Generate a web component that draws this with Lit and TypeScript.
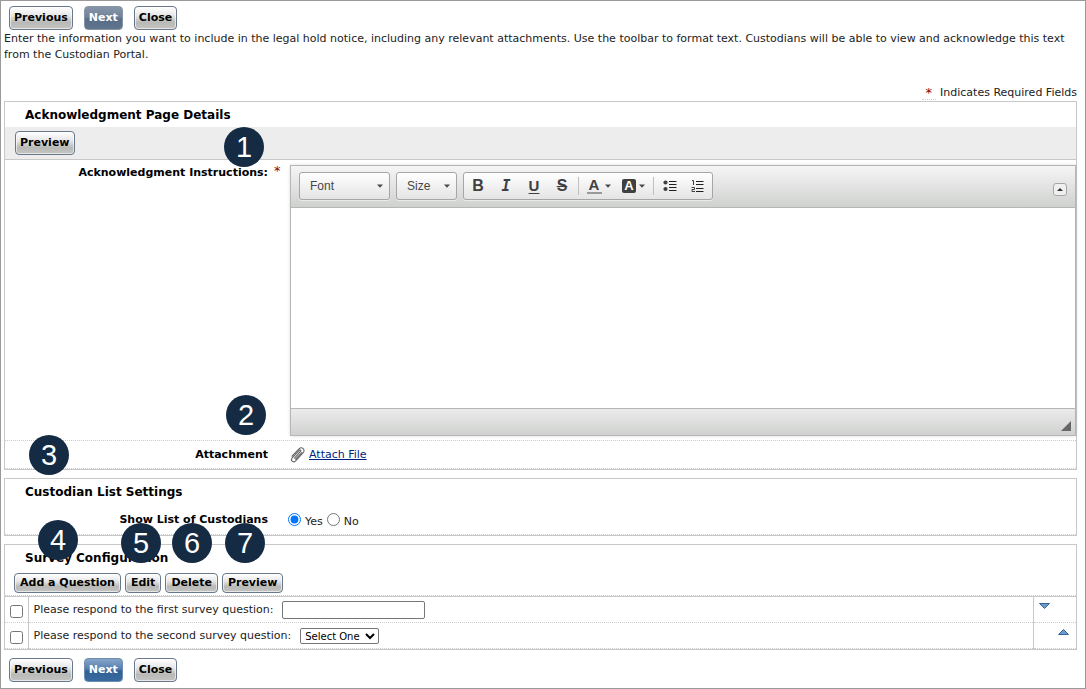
import { LitElement, html, css, svg } from "lit";
import { customElement, property } from "lit/decorators.js";

const caret = html`<svg class="caret" width="6" height="4" viewBox="0 0 6 4" aria-hidden="true"><path d="M0 0.5H6L3 3.8Z" fill="#484848" /></svg>`;

@customElement("rich-editor")
class RichEditor extends LitElement {
  static styles = css`
    :host { display: block; min-width: 0; }
    * { box-sizing: border-box; }
    .editor { border: 1px solid #b6b6b6; box-shadow: 0 0 3px rgba(0, 0, 0, 0.15); background: #fff; }
    .top {
      display: flex; align-items: center; gap: 6px; height: 42px; padding: 0 8px 2px;
      border-bottom: 1px solid #b6b6b6;
      background: linear-gradient(#f5f5f5, #cfd1cf);
    }
    .combo { display: inline-grid; align-items: center; }
    .combo > * { grid-area: 1 / 1; }
    .combo .caret { justify-self: end; margin-right: 7px; pointer-events: none; }
    select {
      appearance: none; height: 28px; margin: 0; padding: 0 18px 0 10px;
      border: 1px solid #a6a6a6; border-radius: 3px;
      background: linear-gradient(#fff, #e4e4e4);
      color: #474747; font: 12px/16px "Liberation Sans", Arial, sans-serif;
      box-shadow: 0 1px 0 rgba(255, 255, 255, 0.5);
    }
    .font { width: 91px; }
    .size { width: 61px; }
    .group {
      display: flex; align-items: center; height: 28px;
      border: 1px solid #a6a6a6; border-radius: 3px;
      background: linear-gradient(#fff, #e4e4e4);
      box-shadow: 0 1px 0 rgba(255, 255, 255, 0.5);
    }
    button {
      display: flex; align-items: center; justify-content: center; gap: 3px;
      width: 28px; height: 26px; margin: 0; padding: 0; border: 0; background: none;
      color: #404040; font: bold 16px/16px "Liberation Sans", Arial, sans-serif;
    }
    .wide { width: 35px; }
    .italic { font: italic bold 15px/16px "DejaVu Sans Mono", monospace; }
    .underline { font-size: 15px; text-decoration: underline; text-underline-offset: 2px; text-decoration-thickness: 1px; }
    .strike { text-decoration: line-through; text-decoration-thickness: 1px; }
    .ink { width: 15px; height: 16px; border-bottom: 2px solid #999; font-size: 15px; line-height: 14px; }
    .fill { width: 14px; height: 14px; border-radius: 2px; background: #404040; color: #fff; font-size: 13px; line-height: 14px; }
    .sep { width: 1px; height: 18px; margin: 0 2px; background: #c0c0c0; }
    .collapse {
      width: 14px; height: 13px; margin: 8px 0 0 auto;
      border: 1px solid #a6a6a6; border-radius: 3px; background: #efefef;
    }
    textarea {
      display: block; width: 100%; height: 200px; margin: 0; padding: 8px;
      border: 0; resize: none; outline: 0; background: #fff;
      font: 12px/16px "Liberation Sans", Arial, sans-serif;
    }
    .bottom {
      display: flex; align-items: flex-end; justify-content: flex-end;
      height: 27px; padding: 4px; border-top: 1px solid #b6b6b6;
      background: linear-gradient(#ebebeb, #cfd1cf);
    }
    svg { display: block; }
  `;

  render() {
    return html`
      <div class="editor">
        <div class="top">
          <span class="combo"><select class="font" aria-label="Font"><option>Font</option></select>${caret}</span>
          <span class="combo"><select class="size" aria-label="Size"><option>Size</option></select>${caret}</span>
          <div class="group">
            <button aria-label="Bold">B</button>
            <button class="italic" aria-label="Italic">I</button>
            <button class="underline" aria-label="Underline">U</button>
            <button class="strike" aria-label="Strikethrough">S</button>
            <span class="sep"></span>
            <button class="wide" aria-label="Text color"><span class="ink">A</span>${caret}</button>
            <button class="wide" aria-label="Background color"><span class="fill">A</span>${caret}</button>
            <span class="sep"></span>
            <button aria-label="Bulleted list">
              <svg width="14" height="12" viewBox="0 0 14 12">
                <g fill="#404040"><circle cx="2.5" cy="2.5" r="2.1" /><circle cx="2.5" cy="9" r="2.1" /></g>
                <path d="M6 1.5h7.5M6 4.5h7.5M6 7.5h7.5M6 10.5h7.5" stroke="#202020" />
              </svg>
            </button>
            <button aria-label="Numbered list">
              <svg width="14" height="12" viewBox="0 0 14 12">
                <path d="M1 0.5h1.5V5M0.5 7.5h3V9.5H1V11.5H4" fill="none" stroke="#404040" />
                <path d="M5 1.5h7.5M5 4.5h7.5M5 8.5h7.5M5 11.5h7.5" stroke="#202020" />
              </svg>
            </button>
          </div>
          <button class="collapse" aria-label="Collapse toolbar">
            <svg width="6" height="3" viewBox="0 0 6 3"><path d="M0 3H6L3 0Z" fill="#333" /></svg>
          </button>
        </div>
        <textarea aria-label="Acknowledgment Instructions"></textarea>
        <div class="bottom">
          <svg width="10" height="10" viewBox="0 0 10 10"><path d="M10 0V10H0Z" fill="#666" /></svg>
        </div>
      </div>
    `;
  }
}

@customElement("step-buttons")
class StepButtons extends LitElement {
  @property() tone = "muted";

  static styles = css`
    :host { display: flex; gap: 11px; }
    button {
      box-sizing: border-box; height: 24px; margin: 0; padding: 0 4px 1px;
      border: 1px solid #68788a; border-radius: 4px;
      background: linear-gradient(#fff, #e6e6e6 40%, #b9b9b7 70%, #c4c4c2);
      box-shadow: inset 0 0 0 1px rgba(255, 255, 255, 0.6);
      color: #000; font: bold 11px/16px "DejaVu Sans", Verdana, sans-serif;
    }
    .muted { border-color: #8794a5; background: linear-gradient(#8795a8, #71839a 45%, #576d88 55%, #60748d); color: #fff; box-shadow: none; }
    .active { border-color: #6e8db0; background: linear-gradient(#86a5c8, #5580b0 45%, #2f6096 55%, #386a9f); color: #fff; box-shadow: none; }
  `;

  render() {
    return html`<button>Previous</button><button class=${this.tone}>Next</button><button>Close</button>`;
  }
}

const callouts = [
  { n: 1, x: 223, y: 126 },
  { n: 2, x: 225, y: 394 },
  { n: 3, x: 28, y: 434 },
  { n: 4, x: 37, y: 519 },
  { n: 5, x: 120, y: 522 },
  { n: 6, x: 171, y: 522 },
  { n: 7, x: 224, y: 522 },
];

@customElement("app-root")
class AppRoot extends LitElement {
  static styles = css`
    :host {
      display: block; position: relative; box-sizing: border-box; min-height: 100vh;
      padding: 5px 8px 4px 3px; border: 1px solid #999; background: #fff;
      color: #222; font: 11px/16px "DejaVu Sans", Verdana, sans-serif;
    }
    * { box-sizing: border-box; }
    p { margin: 0; padding-top: 1px; }
    step-buttons { padding: 0 5px; }
    .required { display: flex; justify-content: flex-end; gap: 4px; margin-top: 22px; height: 16px; }
    .star { color: #8b0000; font-size: 13px; line-height: 16px; }
    .required .star { height: 15px; padding: 0 4px; border-bottom: 1px dotted #ccc; }
    .panel { margin-bottom: 8px; border: 1px solid #c8c8c8; }
    h2 { margin: 0; padding: 1px 20px 0; color: #000; font-size: 12px; line-height: 24px; }
    .bar { height: 33px; padding: 4px 10px; border-bottom: 1px solid #c8c8c8; background: #ededed; }
    .field { display: grid; grid-template-columns: 263px 1fr; column-gap: 22px; border-bottom: 1px dotted #ccc; }
    .name { color: #000; font-weight: bold; text-align: right; }
    .instructions { padding: 5px 0 4px; }
    .instructions .name { position: relative; }
    .name .star { position: absolute; left: 100%; bottom: 100%; margin: 0 0 -14px 6px; font-weight: normal; }
    .attach { padding: 6px 0 5px; }
    .file { display: flex; align-items: center; gap: 4px; }
    a { color: #001f7e; line-height: 14px; }
    .show { padding: 8px 0 5px; }
    .choices { display: flex; align-items: center; height: 17px; margin-left: -2px; }
    .choices input { width: 13px; height: 13px; margin: 0 4px 2px 0; }
    .choices label { padding-top: 2px; margin-right: 4px; }
    .small {
      display: block; height: 24px; padding: 0 4px 1px; border: 1px solid #68788a; border-radius: 4px;
      background: linear-gradient(#fff, #e6e6e6 40%, #b9b9b7 70%, #c4c4c2);
      box-shadow: inset 0 0 0 1px rgba(255, 255, 255, 0.6);
      color: #000; font: bold 11px/16px "DejaVu Sans", Verdana, sans-serif;
    }
    .actions { display: flex; gap: 4px; padding: 3px 9px 2px; border-bottom: 1px dotted #ccc; }
    .actions .small { height: 20px; padding: 0 5px; }
    table { width: 100%; border-collapse: collapse; border-top: 1px solid #c8c8c8; }
    td { height: 26px; padding: 1px 0 0; border-bottom: 1px dotted #ccc; vertical-align: middle; }
    .check { width: 23px; border-right: 1px solid #c8c8c8; }
    .check input { display: block; width: 13px; height: 13px; margin: 3px 0 0 5px; }
    .question { display: flex; align-items: center; gap: 9px; padding-left: 5px; }
    .text { width: 143px; height: 18px; margin: 0; border: 1px solid #767676; border-radius: 2px; background: #fff; }
    .pick { width: 79px; height: 16px; margin: 0; padding: 0; border: 1px solid #767676; border-radius: 2px; background: #fff; color: #000; font: 10px/14px "DejaVu Sans", Verdana, sans-serif; }
    .order { width: 43px; border-left: 1px solid #c8c8c8; }
    .move { display: block; margin: 0 0 8px 5px; padding: 0; border: 0; background: none; }
    .up { margin-left: 24px; }
    svg { display: block; }
    .callout {
      position: absolute; width: 40px; height: 40px; border-radius: 50%;
      background: #142b43; color: #fff; text-align: center;
      font: 29px/40px "Liberation Sans", Arial, sans-serif;
    }
  `;

  private row(n: number, label: string, control: unknown, down: boolean) {
    return html`
      <tr>
        <td class="check"><input type="checkbox" aria-label="Select question ${n}" /></td>
        <td><div class="question"><label for="q${n}">${label}</label>${control}</div></td>
        <td class="order">
          <button class="move ${down ? "" : "up"}" aria-label=${down ? "Move down" : "Move up"}>
            <svg width="11" height="6" viewBox="0 0 11 6">
              ${down
                ? svg`<path d="M0.5 0.5H10.5L5.5 5.5Z" fill="#6d9acb" stroke="#35649b" />`
                : svg`<path d="M0.5 5.5H10.5L5.5 0.5Z" fill="#6d9acb" stroke="#35649b" />`}
            </svg>
          </button>
        </td>
      </tr>
    `;
  }

  render() {
    return html`
      <step-buttons tone="muted"></step-buttons>
      <p>Enter the information you want to include in the legal hold notice, including any relevant attachments. Use the toolbar to format text. Custodians will be able to view and acknowledge this text from the Custodian Portal.</p>
      <div class="required"><span class="star">*</span><span>Indicates Required Fields</span></div>

      <section class="panel">
        <h2>Acknowledgment Page Details</h2>
        <div class="bar"><button class="small">Preview</button></div>
        <div class="field instructions">
          <div class="name">Acknowledgment Instructions:<span class="star">*</span></div>
          <rich-editor></rich-editor>
        </div>
        <div class="field attach">
          <div class="name">Attachment</div>
          <div class="file">
            <svg width="15" height="16" viewBox="0 0 15 16" fill="none" stroke="#666" stroke-width="1.1" stroke-linecap="round">
              <path d="M4.5 11.2L10.6 4.4C11.3 3.6 10.2 2.4 9.3 3.3L2.2 10.9C0.2 13.2 3 16.4 5.4 14.1L13 5.9C15.8 2.8 11.9-0.9 9 1.9L2 9.2M5.6 12.2L11.8 5.5" />
            </svg>
            <a href="#attach">Attach File</a>
          </div>
        </div>
      </section>

      <section class="panel">
        <h2>Custodian List Settings</h2>
        <div class="field show">
          <div class="name" id="show">Show List of Custodians</div>
          <div class="choices" role="radiogroup" aria-labelledby="show">
            <input type="radio" name="show" id="yes" checked /><label for="yes">Yes</label>
            <input type="radio" name="show" id="no" /><label for="no">No</label>
          </div>
        </div>
      </section>

      <section class="panel">
        <h2>Survey Configuration</h2>
        <div class="actions">
          ${["Add a Question", "Edit", "Delete", "Preview"].map((t) => html`<button class="small">${t}</button>`)}
        </div>
        <table>
          <tbody>
            ${this.row(1, "Please respond to the first survey question:", html`<input class="text" type="text" id="q1" />`, true)}
            ${this.row(2, "Please respond to the second survey question:", html`<select class="pick" id="q2"><option>Select One</option></select>`, false)}
          </tbody>
        </table>
      </section>

      <step-buttons tone="active"></step-buttons>
      ${callouts.map((c) => html`<span class="callout" style="left:${c.x}px;top:${c.y}px">${c.n}</span>`)}
    `;
  }
}
